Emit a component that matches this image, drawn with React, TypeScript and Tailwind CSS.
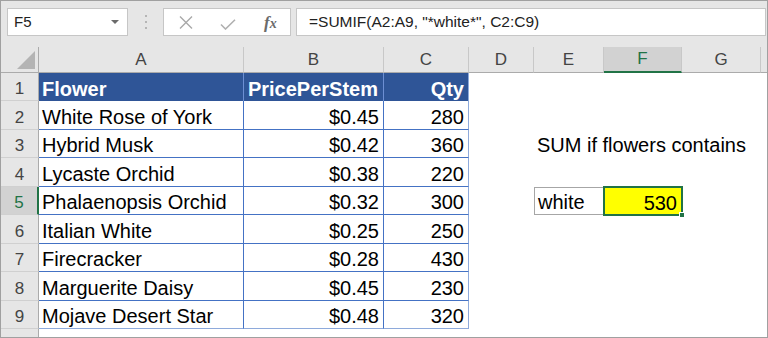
import React from 'react';

const data = [
  ['White Rose of York', '$0.45', '280'],
  ['Hybrid Musk', '$0.42', '360'],
  ['Lycaste Orchid', '$0.38', '220'],
  ['Phalaenopsis Orchid', '$0.32', '300'],
  ['Italian White', '$0.25', '250'],
  ['Firecracker', '$0.28', '430'],
  ['Marguerite Daisy', '$0.45', '230'],
  ['Mojave Desert Star', '$0.48', '320'],
];

const letters = ['A', 'B', 'C', 'D', 'E', 'F', 'G'];
const colW = ['w-[205px]', 'w-[140px]', 'w-[85px]', 'w-[65px]', 'w-[70px]', 'w-[78px]', 'w-[79px]'];
const rowH = ['h-[28px]', 'h-[29px]', 'h-[28px]', 'h-[29px]', 'h-[28px]', 'h-[29px]', 'h-[28px]', 'h-[29px]', 'h-[28px]'];

const RowHead: React.FC<{ n: number; h: string; active?: boolean }> = ({ n, h, active }) => (
  <div
    className={`${h} w-[38px] shrink-0 flex items-end justify-center border-b border-[#d0d0d0] text-[17px] leading-[22px] ${
      active ? 'bg-[#d2d2d2] text-[#217346] border-r-2 border-r-[#217346]' : 'bg-[#e6e6e6] text-[#444] border-r border-r-[#ababab]'
    }`}
  >
    {n}
  </div>
);

const Toolbar = () => (
  <div className="h-[46px] flex items-start pt-[7px]">
    <div className="ml-[6px] w-[121px] h-[28px] bg-white border border-[#c6c6c6] flex items-center justify-between pl-[6px] pr-[8px]">
      <span className="text-[15px] text-[#222]">F5</span>
      <svg width="8" height="4" viewBox="0 0 8 4">
        <path d="M0 0h8L4 4z" fill="#6b6b6b" />
      </svg>
    </div>
    <div className="w-[35px] h-[28px] flex flex-col items-center justify-center gap-[4px]">
      <span className="w-[2px] h-[2px] bg-[#b5b5b5]" />
      <span className="w-[2px] h-[2px] bg-[#b5b5b5]" />
      <span className="w-[2px] h-[2px] bg-[#b5b5b5]" />
    </div>
    <div className="w-[128px] h-[28px] bg-white border border-[#c6c6c6] flex items-center">
      <svg className="ml-[15px]" width="14" height="13" viewBox="0 0 14 13">
        <path d="M1 0.5L13 12.5M13 0.5L1 12.5" stroke="#a9a9a9" strokeWidth="1.4" />
      </svg>
      <svg className="ml-[27px] mt-[4px]" width="16" height="11" viewBox="0 0 16 11">
        <path d="M1 5.5L5.5 10L15 0.8" stroke="#b0b0b0" strokeWidth="1.6" fill="none" />
      </svg>
      <span className="ml-[28px] font-['Liberation_Serif',serif] italic font-bold text-[17px] text-[#6b6b6b] leading-none">
        f<span className="text-[14px]">x</span>
      </span>
    </div>
    <div className="ml-[5px] mr-[1px] flex-1 h-[28px] bg-white border border-[#c6c6c6] flex items-center pl-[12px]">
      <span className="text-[15.5px] text-[#222] whitespace-nowrap">=SUMIF(A2:A9, "*white*", C2:C9)</span>
    </div>
  </div>
);

const ColumnHeader = () => (
  <div className="h-[26px] flex">
    <div className="w-[38px] shrink-0 h-full border-r border-b border-[#ababab] bg-[#e6e6e6] relative">
      <svg className="absolute left-[15px] top-[4px]" width="20" height="19" viewBox="0 0 20 19">
        <path d="M19 0V18H1z" fill="#b4b4b4" />
      </svg>
    </div>
    {letters.map((l, i) => (
      <div
        key={l}
        className={`${colW[i]} shrink-0 h-full flex items-center justify-center text-[17px] border-r border-r-[#c8c8c8] ${
          l === 'F' ? 'bg-[#d2d2d2] text-[#217346] border-b-2 border-b-[#217346]' : 'bg-[#e6e6e6] text-[#444] border-b border-b-[#ababab]'
        }`}
      >
        {l}
      </div>
    ))}
    <div className="flex-1 h-full bg-[#e6e6e6] border-b border-[#ababab]" />
  </div>
);

export default function App() {
  const cell = 'shrink-0 flex items-end text-[20px] leading-[23px] whitespace-nowrap';
  const tbl = 'border-r border-b border-[#4472c4]';
  return (
    <div className="w-[768px] h-[338px] border border-[#a0a0a0] bg-[#e6e6e6] overflow-hidden flex flex-col font-['Liberation_Sans',Arial,sans-serif] text-black">
      <Toolbar />
      <ColumnHeader />
      <div className="flex-1 bg-white flex flex-col">
        {/* row 1: table header */}
        <div className="flex">
          <RowHead n={1} h={rowH[0]} />
          <div className={`${cell} ${colW[0]} ${rowH[0]} bg-[#2f5597] text-white font-bold pl-[3px] border-r border-[#6d8fd3]`}>Flower</div>
          <div className={`${cell} ${colW[1]} ${rowH[0]} bg-[#2f5597] text-white font-bold justify-end pr-[5px] border-r border-[#6d8fd3]`}>PricePerStem</div>
          <div className={`${cell} ${colW[2]} ${rowH[0]} bg-[#2f5597] text-white font-bold justify-end pr-[4px] border-r border-[#8eaadb]`}>Qty</div>
        </div>
        {data.map((r, idx) => {
          const n = idx + 2;
          const h = rowH[idx + 1];
          const last = idx === data.length - 1;
          return (
            <div key={n} className="flex">
              <RowHead n={n} h={h} active={n === 5} />
              <div className={`${cell} ${colW[0]} ${h} pl-[3px] ${tbl} ${last ? 'border-b-[#8eaadb]' : ''}`}>{r[0]}</div>
              <div className={`${cell} ${colW[1]} ${h} justify-end pr-[4px] ${tbl} ${last ? 'border-b-[#8eaadb]' : ''}`}>{r[1]}</div>
              <div className={`${cell} ${colW[2]} ${h} justify-end pr-[4px] ${tbl} border-r-[#8eaadb] ${last ? 'border-b-[#8eaadb]' : ''}`}>{r[2]}</div>
              <div className={`${cell} ${colW[3]} ${h}`} />
              {n === 3 && <div className={`${cell} ${colW[4]} ${h} pl-[3px] pb-[1px]`}>SUM if flowers contains</div>}
              {n === 5 && (
                <>
                  <div className={`${cell} ${colW[4]} ${h} pl-[3px] border border-r-0 border-[#a6a6a6]`}>white</div>
                  <div className={`${cell} ${colW[5]} ${h} relative bg-[#ffff00] justify-end pr-[5px]`}>
                    530
                    <span className="absolute -inset-[1px] border-2 border-[#217346]" />
                    <span className="absolute -right-[3px] -bottom-[3px] w-[6px] h-[6px] bg-[#217346] border border-white" />
                  </div>
                </>
              )}
            </div>
          );
        })}
        <div className="flex flex-1">
          <div className="w-[38px] shrink-0 bg-[#e6e6e6] border-r border-[#ababab]" />
        </div>
      </div>
    </div>
  );
}
